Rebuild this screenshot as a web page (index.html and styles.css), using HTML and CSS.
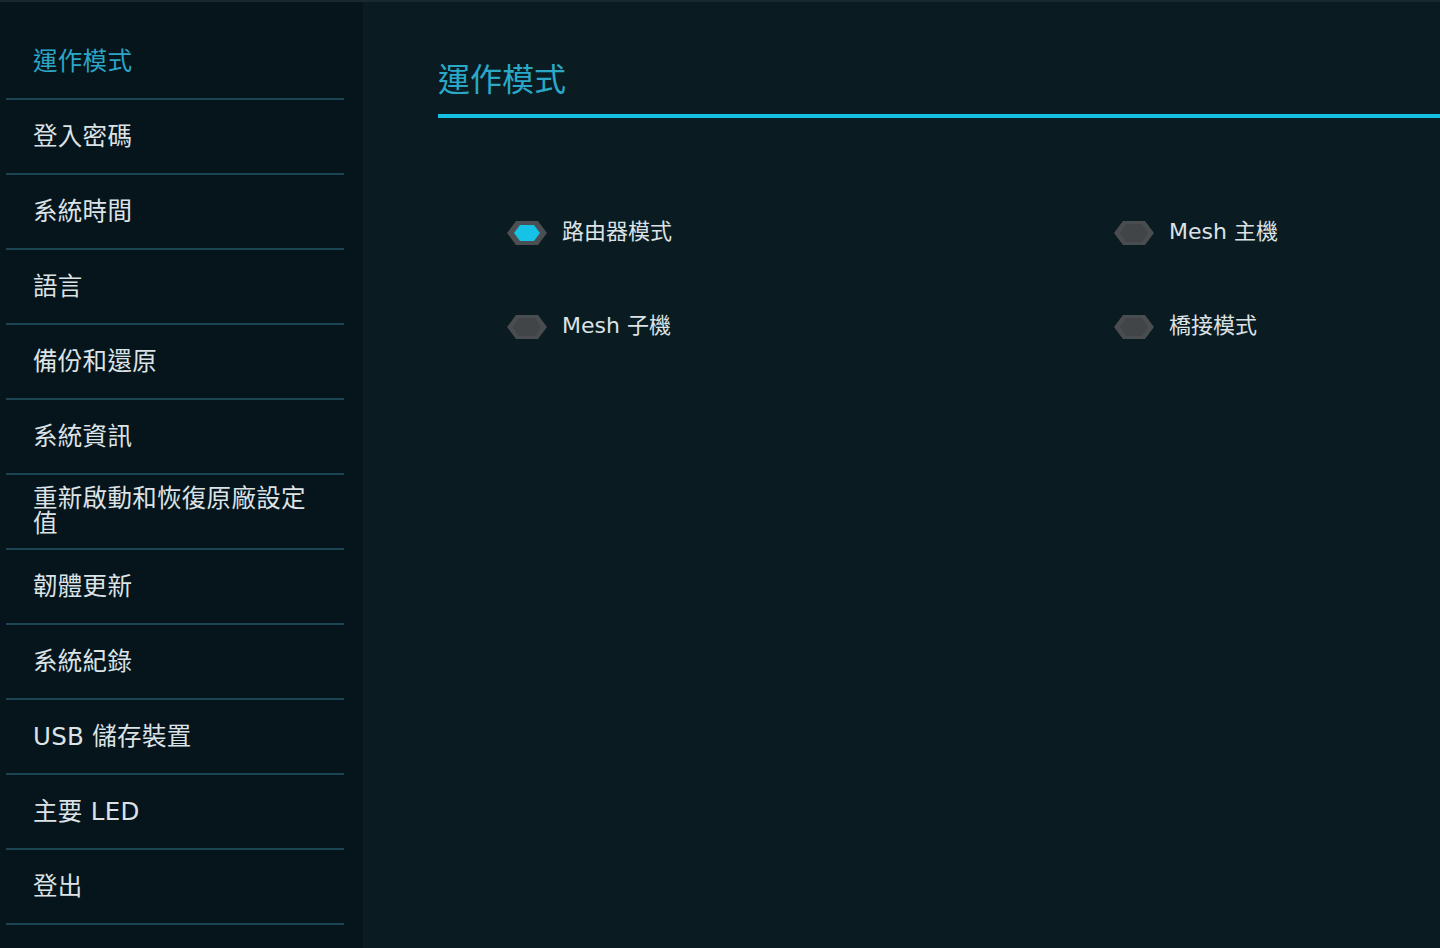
FILE: index.html
```html
<!DOCTYPE html>
<html lang="zh-Hant">
<head>
<meta charset="utf-8">
<title>運作模式</title>
<link rel="stylesheet" href="styles.css">
</head>
<body>
<div class="app">
  <nav class="sidebar">
    <a class="nav-item active">運作模式</a>
    <a class="nav-item">登入密碼</a>
    <a class="nav-item">系統時間</a>
    <a class="nav-item">語言</a>
    <a class="nav-item">備份和還原</a>
    <a class="nav-item">系統資訊</a>
    <a class="nav-item"><span class="wrap">重新啟動和恢復原廠設定值</span></a>
    <a class="nav-item">韌體更新</a>
    <a class="nav-item">系統紀錄</a>
    <a class="nav-item">USB 儲存裝置</a>
    <a class="nav-item">主要 LED</a>
    <a class="nav-item">登出</a>
  </nav>
  <main class="main">
    <h1 class="title">運作模式</h1>
    <div class="options">
      <label class="option selected">
        <svg class="hex" viewBox="0 0 40 24" width="40" height="24"><polygon points="0,12 9,0 31,0 40,12 31,24 9,24" fill="#4b4f52"/><polygon points="7,12 13,4 27,4 33,12 27,20 13,20" fill="#16c2e6"/></svg>
        <span class="label">路由器模式</span>
      </label>
      <label class="option">
        <svg class="hex" viewBox="0 0 40 24" width="40" height="24"><polygon points="0,12 9,0 31,0 40,12 31,24 9,24" fill="#4a4d4f"/><polygon points="6,12 12,3 28,3 34,12 28,21 12,21" fill="#414548"/></svg>
        <span class="label">Mesh 主機</span>
      </label>
      <label class="option">
        <svg class="hex" viewBox="0 0 40 24" width="40" height="24"><polygon points="0,12 9,0 31,0 40,12 31,24 9,24" fill="#4a4d4f"/><polygon points="6,12 12,3 28,3 34,12 28,21 12,21" fill="#414548"/></svg>
        <span class="label">Mesh 子機</span>
      </label>
      <label class="option">
        <svg class="hex" viewBox="0 0 40 24" width="40" height="24"><polygon points="0,12 9,0 31,0 40,12 31,24 9,24" fill="#4a4d4f"/><polygon points="6,12 12,3 28,3 34,12 28,21 12,21" fill="#414548"/></svg>
        <span class="label">橋接模式</span>
      </label>
    </div>
  </main>
</div>
</body>
</html>
```
FILE: styles.css
```css
html, body {
  margin: 0;
  padding: 0;
  height: 100%;
}
body {
  background: #0b1b22;
  font-family: "DejaVu Sans", "Noto Sans CJK TC", sans-serif;
  color: #dce3e6;
}
.app {
  display: flex;
  min-height: 948px;
  border-top: 2px solid #17282f;
  box-sizing: border-box;
}
.sidebar {
  width: 363px;
  flex: none;
  background: #06141b;
  padding: 23px 19px 0 6px;
  box-sizing: border-box;
  display: flex;
  flex-direction: column;
}
.nav-item {
  height: 75px;
  box-sizing: border-box;
  border-bottom: 2px solid #1b4553;
  padding: 0 30px 0 27px;
  display: flex;
  align-items: center;
  font-size: 24.5px;
  line-height: 25px;
  letter-spacing: 0.3px;
  color: #dce3e6;
  cursor: pointer;
}
.nav-item.active {
  color: #2ba6c6;
}
.wrap {
  display: block;
  max-width: 286px;
  padding-bottom: 2px;
}
.main {
  flex: 1;
  padding: 56px 0 0 75px;
}
.title {
  margin: 0;
  font-weight: normal;
  font-size: 32px;
  line-height: 44px;
  color: #2aa8c8;
  padding-bottom: 12px;
  border-bottom: 4px solid #16c0e2;
}
.options {
  display: grid;
  grid-template-columns: 607px 1fr;
  row-gap: 70px;
  padding: 103px 0 0 69px;
}
.option {
  display: flex;
  align-items: center;
  gap: 15px;
  height: 24px;
  font-size: 22px;
  color: #dce3e6;
  cursor: pointer;
}
.hex {
  flex: none;
  display: block;
}
.label {
  line-height: 24px;
  position: relative;
  top: -1px;
}
```
